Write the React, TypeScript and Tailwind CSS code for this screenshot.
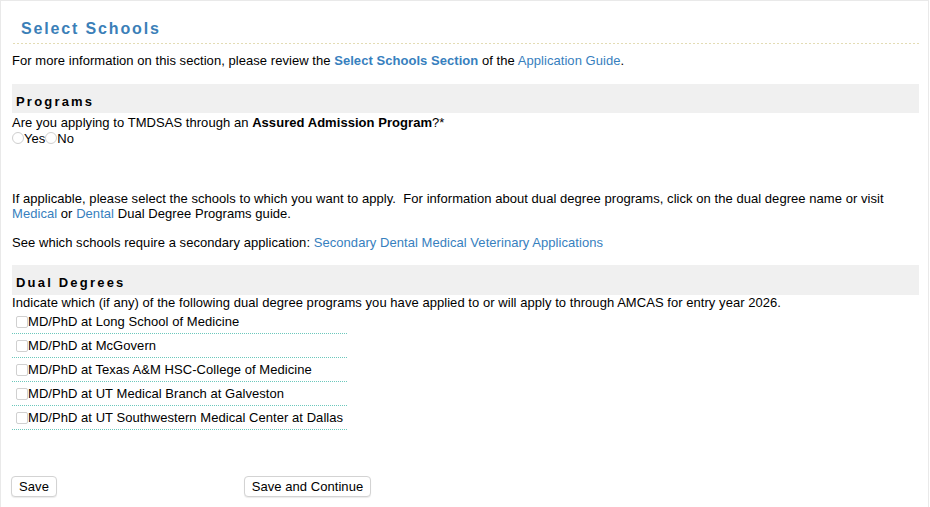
import { useState } from "react";

const schools = [
  "MD/PhD at Long School of Medicine",
  "MD/PhD at McGovern",
  "MD/PhD at Texas A&M HSC-College of Medicine",
  "MD/PhD at UT Medical Branch at Galveston",
  "MD/PhD at UT Southwestern Medical Center at Dallas",
];

export default function App() {
  const [assured, setAssured] = useState<string | null>(null);
  const [checked, setChecked] = useState<boolean[]>(schools.map(() => false));

  return (
    <div
      className="w-[929px] h-[507px] bg-white border-l border-t border-r border-[#e9e9e9] text-[13px] leading-[15px] tracking-[0.05px] text-black"
      style={{ fontFamily: '"Liberation Sans", Arial, sans-serif' }}
    >
      <div className="pl-[11px] pr-[9px]">
        {/* Title */}
        <div className="pt-[17px] pb-[3px] pl-[9px]">
          <h1 className="text-[16px] leading-[22px] font-bold tracking-[1.85px] text-[#3b7fb8]">
            Select Schools
          </h1>
        </div>
        <div className="h-[1px] ml-[1px] bg-[repeating-linear-gradient(to_right,#e3dcb4_0_2px,transparent_2px_4px)]" />

        <p className="mt-[9px]">
          For more information on this section, please review the{" "}
          <a className="font-bold text-[#3780be]">Select Schools Section</a> of
          the <a className="text-[#3780be]">Application Guide</a>.
        </p>

        {/* Programs */}
        <div className="mt-[16px] bg-[#f0f0f0] pt-[10px] pb-[4px] pl-[4px]">
          <h2 className="font-bold tracking-[2.2px]">Programs</h2>
        </div>
        <p className="mt-[2px]">
          Are you applying to TMDSAS through an{" "}
          <span className="font-bold">Assured Admission Program</span>?*
        </p>
        <div className="flex items-center h-[16px]">
          {["Yes", "No"].map((opt) => (
            <label key={opt} className="flex items-center cursor-pointer">
              <span
                onClick={() => setAssured(opt)}
                className="w-[12px] h-[12px] rounded-full border border-[#cfcfcf] bg-white flex items-center justify-center"
              >
                {assured === opt && (
                  <span className="w-[6px] h-[6px] rounded-full bg-[#3780be]" />
                )}
              </span>
              <span>{opt}</span>
            </label>
          ))}
        </div>

        <p className="mt-[45px] whitespace-pre-wrap">
          {"If applicable, please select the schools to which you want to apply.  For information about dual degree programs, click on the dual degree name or visit "}
          <a className="text-[#3780be]">Medical</a> or{" "}
          <a className="text-[#3780be]">Dental</a> Dual Degree Programs guide.
        </p>

        <p className="mt-[14px]">
          See which schools require a secondary application:{" "}
          <a className="text-[#3780be]">
            Secondary Dental Medical Veterinary Applications
          </a>
        </p>

        {/* Dual Degrees */}
        <div className="mt-[15px] bg-[#f0f0f0] pt-[10px] pb-[5px] pl-[4px]">
          <h2 className="font-bold tracking-[2.2px]">Dual Degrees</h2>
        </div>
        <p>
          Indicate which (if any) of the following dual degree programs you
          have applied to or will apply to through AMCAS for entry year 2026.
        </p>

        <div className="w-[335px]">
          {schools.map((s, i) => (
            <div key={s}>
              <label className="flex items-center pt-[4px] pb-[4px] cursor-pointer">
                <span
                  onClick={() =>
                    setChecked((c) => c.map((v, j) => (j === i ? !v : v)))
                  }
                  className="ml-[4px] w-[12px] h-[12px] rounded-[2px] border border-[#d0d0d0] bg-white flex items-center justify-center text-[9px] leading-none text-[#3780be]"
                >
                  {checked[i] ? "✓" : ""}
                </span>
                <span>{s}</span>
              </label>
              <div className="h-[1px] bg-[repeating-linear-gradient(to_right,#6cc8bc_0_1px,transparent_1px_2px)]" />
            </div>
          ))}
        </div>

        {/* Buttons */}
        <div className="mt-[46px] -ml-[1px] flex items-center">
          <button className="h-[21px] w-[46px] rounded-[4px] border border-[#d3d3d3] bg-white shadow-[0_1px_1px_rgba(0,0,0,0.08)] text-[13px]">
            Save
          </button>
          <button className="ml-[187px] h-[21px] w-[127px] rounded-[4px] border border-[#d3d3d3] bg-white shadow-[0_1px_1px_rgba(0,0,0,0.08)] text-[13px]">
            Save and Continue
          </button>
        </div>
      </div>
    </div>
  );
}
